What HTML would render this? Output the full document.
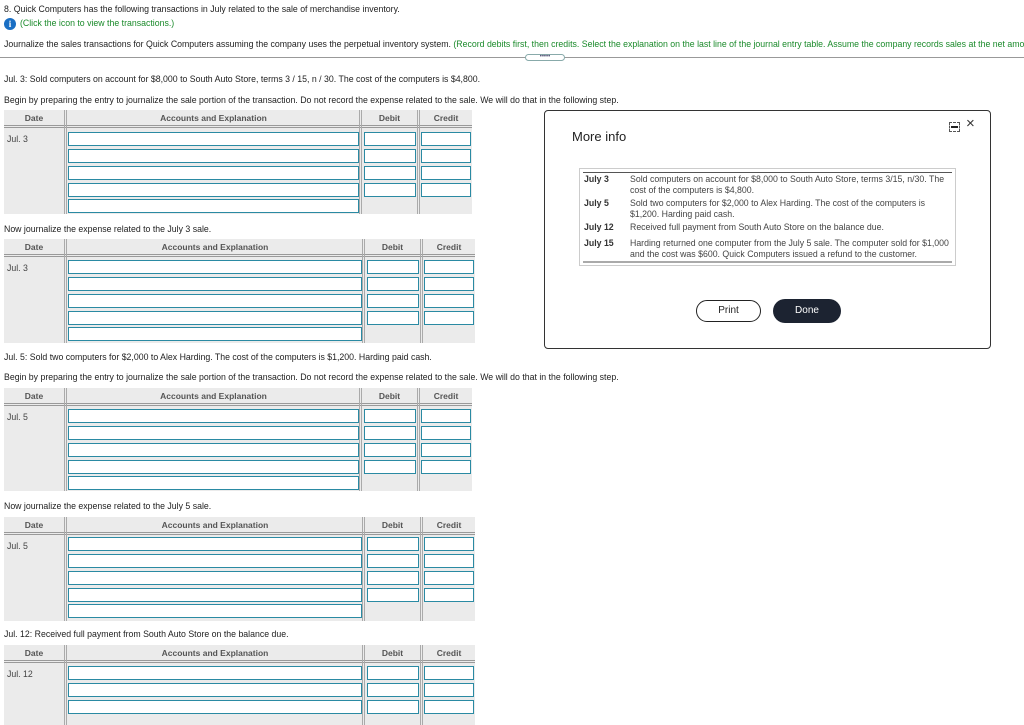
<!DOCTYPE html>
<html><head><meta charset="utf-8"><style>
*{margin:0;padding:0;box-sizing:border-box}
body{width:1024px;height:718px;overflow:hidden;background:#fff;font-family:"Liberation Sans",Arial,sans-serif;font-size:8.75px;color:#222;position:relative}
.t{position:absolute;white-space:nowrap}
.g{color:#1a8a2a}
.tbl{position:absolute;left:4px;background:#ebebeb}
.hd{position:absolute;top:0;height:18px;border-bottom:3px double #999;font-weight:bold;color:#555;text-align:center;line-height:16px;font-size:8.5px}
.vb{position:absolute;top:0;bottom:0;width:3px;border-left:1px solid #aaa;border-right:1px solid #aaa}
.in{position:absolute;height:14px;background:#fff;border:1px solid #2a8aa3}
.dt{position:absolute;left:3px;top:24px;color:#444}
.modal{position:absolute;left:544px;top:110px;width:447px;height:239px;border:1.5px solid #333;border-radius:4px;background:#fff}
</style></head><body>
<div class="t" style="left:4px;top:4px">8. Quick Computers has the following transactions in July related to the sale of merchandise inventory.</div>
<div style="position:absolute;left:4px;top:18px;width:12px;height:12px;border-radius:50%;background:#1a6fc4;color:#fff;font:bold 9px 'Liberation Serif',serif;text-align:center;line-height:12px">i</div>
<div class="t g" style="left:20px;top:18px">(Click the icon to view the transactions.)</div>
<div class="t" style="left:4px;top:39px">Journalize the sales transactions for Quick Computers assuming the company uses the perpetual inventory system. <span class="g">(Record debits first, then credits. Select the explanation on the last line of the journal entry table. Assume the company records sales at the net amount.)</span></div>
<div style="position:absolute;left:0;top:57px;width:1024px;height:1px;background:#999"></div>
<div style="position:absolute;left:525px;top:54px;width:40px;height:7px;border:1px solid #8aa;border-radius:4px;background:#fff;font-size:6px;line-height:4px;text-align:center;color:#557">•••••</div>

<div class="t" style="left:4px;top:74px">Jul. 3: Sold computers on account for $8,000 to South Auto Store, terms 3 / 15, n / 30. The cost of the computers is $4,800.</div>
<div class="t" style="left:4px;top:95px">Begin by preparing the entry to journalize the sale portion of the transaction. Do not record the expense related to the sale. We will do that in the following step.</div>

<div class="tbl" style="top:110px;width:468px;height:104px">
<div class="hd" style="left:0;width:468px"></div>
<div class="hd" style="left:0;width:60px">Date</div>
<div class="hd" style="left:64px;width:291px">Accounts and Explanation</div>
<div class="hd" style="left:358px;width:55px">Debit</div>
<div class="hd" style="left:416px;width:52px">Credit</div>
<div class="vb" style="left:60px"></div><div class="vb" style="left:355px"></div><div class="vb" style="left:413px"></div>
<div class="dt">Jul. 3</div>
<div class="in" style="left:64px;top:22px;width:291px"></div><div class="in" style="left:360px;top:22px;width:52px"></div><div class="in" style="left:417px;top:22px;width:50px"></div>
<div class="in" style="left:64px;top:39px;width:291px"></div><div class="in" style="left:360px;top:39px;width:52px"></div><div class="in" style="left:417px;top:39px;width:50px"></div>
<div class="in" style="left:64px;top:56px;width:291px"></div><div class="in" style="left:360px;top:56px;width:52px"></div><div class="in" style="left:417px;top:56px;width:50px"></div>
<div class="in" style="left:64px;top:73px;width:291px"></div><div class="in" style="left:360px;top:73px;width:52px"></div><div class="in" style="left:417px;top:73px;width:50px"></div>
<div class="in" style="left:64px;top:89px;width:291px"></div>
</div>

<div class="t" style="left:4px;top:224px">Now journalize the expense related to the July 3 sale.</div>
<div class="tbl" style="top:239px;width:471px;height:104px">
<div class="hd" style="left:0;width:471px"></div>
<div class="hd" style="left:0;width:60px">Date</div>
<div class="hd" style="left:64px;width:294px">Accounts and Explanation</div>
<div class="hd" style="left:361px;width:55px">Debit</div>
<div class="hd" style="left:419px;width:52px">Credit</div>
<div class="vb" style="left:60px"></div><div class="vb" style="left:358px"></div><div class="vb" style="left:416px"></div>
<div class="dt">Jul. 3</div>
<div class="in" style="left:64px;top:21px;width:294px"></div><div class="in" style="left:363px;top:21px;width:52px"></div><div class="in" style="left:420px;top:21px;width:50px"></div>
<div class="in" style="left:64px;top:38px;width:294px"></div><div class="in" style="left:363px;top:38px;width:52px"></div><div class="in" style="left:420px;top:38px;width:50px"></div>
<div class="in" style="left:64px;top:55px;width:294px"></div><div class="in" style="left:363px;top:55px;width:52px"></div><div class="in" style="left:420px;top:55px;width:50px"></div>
<div class="in" style="left:64px;top:72px;width:294px"></div><div class="in" style="left:363px;top:72px;width:52px"></div><div class="in" style="left:420px;top:72px;width:50px"></div>
<div class="in" style="left:64px;top:88px;width:294px"></div>
</div>

<div class="t" style="left:4px;top:352px">Jul. 5: Sold two computers for $2,000 to Alex Harding. The cost of the computers is $1,200. Harding paid cash.</div>
<div class="t" style="left:4px;top:372px">Begin by preparing the entry to journalize the sale portion of the transaction. Do not record the expense related to the sale. We will do that in the following step.</div>
<div class="tbl" style="top:388px;width:468px;height:103px">
<div class="hd" style="left:0;width:468px"></div>
<div class="hd" style="left:0;width:60px">Date</div>
<div class="hd" style="left:64px;width:291px">Accounts and Explanation</div>
<div class="hd" style="left:358px;width:55px">Debit</div>
<div class="hd" style="left:416px;width:52px">Credit</div>
<div class="vb" style="left:60px"></div><div class="vb" style="left:355px"></div><div class="vb" style="left:413px"></div>
<div class="dt">Jul. 5</div>
<div class="in" style="left:64px;top:21px;width:291px"></div><div class="in" style="left:360px;top:21px;width:52px"></div><div class="in" style="left:417px;top:21px;width:50px"></div>
<div class="in" style="left:64px;top:38px;width:291px"></div><div class="in" style="left:360px;top:38px;width:52px"></div><div class="in" style="left:417px;top:38px;width:50px"></div>
<div class="in" style="left:64px;top:55px;width:291px"></div><div class="in" style="left:360px;top:55px;width:52px"></div><div class="in" style="left:417px;top:55px;width:50px"></div>
<div class="in" style="left:64px;top:72px;width:291px"></div><div class="in" style="left:360px;top:72px;width:52px"></div><div class="in" style="left:417px;top:72px;width:50px"></div>
<div class="in" style="left:64px;top:88px;width:291px"></div>
</div>

<div class="t" style="left:4px;top:501px">Now journalize the expense related to the July 5 sale.</div>
<div class="tbl" style="top:517px;width:471px;height:104px">
<div class="hd" style="left:0;width:471px"></div>
<div class="hd" style="left:0;width:60px">Date</div>
<div class="hd" style="left:64px;width:294px">Accounts and Explanation</div>
<div class="hd" style="left:361px;width:55px">Debit</div>
<div class="hd" style="left:419px;width:52px">Credit</div>
<div class="vb" style="left:60px"></div><div class="vb" style="left:358px"></div><div class="vb" style="left:416px"></div>
<div class="dt">Jul. 5</div>
<div class="in" style="left:64px;top:20px;width:294px"></div><div class="in" style="left:363px;top:20px;width:52px"></div><div class="in" style="left:420px;top:20px;width:50px"></div>
<div class="in" style="left:64px;top:37px;width:294px"></div><div class="in" style="left:363px;top:37px;width:52px"></div><div class="in" style="left:420px;top:37px;width:50px"></div>
<div class="in" style="left:64px;top:54px;width:294px"></div><div class="in" style="left:363px;top:54px;width:52px"></div><div class="in" style="left:420px;top:54px;width:50px"></div>
<div class="in" style="left:64px;top:71px;width:294px"></div><div class="in" style="left:363px;top:71px;width:52px"></div><div class="in" style="left:420px;top:71px;width:50px"></div>
<div class="in" style="left:64px;top:87px;width:294px"></div>
</div>

<div class="t" style="left:4px;top:629px">Jul. 12: Received full payment from South Auto Store on the balance due.</div>
<div class="tbl" style="top:645px;width:471px;height:80px">
<div class="hd" style="left:0;width:471px"></div>
<div class="hd" style="left:0;width:60px">Date</div>
<div class="hd" style="left:64px;width:294px">Accounts and Explanation</div>
<div class="hd" style="left:361px;width:55px">Debit</div>
<div class="hd" style="left:419px;width:52px">Credit</div>
<div class="vb" style="left:60px"></div><div class="vb" style="left:358px"></div><div class="vb" style="left:416px"></div>
<div class="dt">Jul. 12</div>
<div class="in" style="left:64px;top:21px;width:294px"></div><div class="in" style="left:363px;top:21px;width:52px"></div><div class="in" style="left:420px;top:21px;width:50px"></div>
<div class="in" style="left:64px;top:38px;width:294px"></div><div class="in" style="left:363px;top:38px;width:52px"></div><div class="in" style="left:420px;top:38px;width:50px"></div>
<div class="in" style="left:64px;top:55px;width:294px"></div><div class="in" style="left:363px;top:55px;width:52px"></div><div class="in" style="left:420px;top:55px;width:50px"></div>
</div>

<div class="modal">
<div class="t" style="left:27px;top:18px;font-size:13px;color:#222">More info</div>
<div style="position:absolute;left:404px;top:11px;width:11px;height:10px;border:1px dashed #555"><div style="position:absolute;left:1px;top:3px;width:7px;height:2px;background:#222"></div></div>
<div class="t" style="left:421px;top:4px;font-size:15px;color:#333">×</div>
<div style="position:absolute;left:34px;top:57px;width:377px;height:98px;border:1px solid #ccc">
 <div style="position:absolute;left:3px;right:3px;top:3px;height:1px;background:#555"></div>
 <div style="position:absolute;left:3px;right:3px;top:92px;height:2px;background:#aaa"></div>
 <div class="t" style="left:4px;top:5px;font-weight:bold;color:#333">July 3</div>
 <div class="t" style="left:50px;top:5px;line-height:10.5px;color:#444">Sold computers on account for $8,000 to South Auto Store, terms 3/15, n/30. The<br>cost of the computers is $4,800.</div>
 <div class="t" style="left:4px;top:29px;font-weight:bold;color:#333">July 5</div>
 <div class="t" style="left:50px;top:29px;line-height:10.5px;color:#444">Sold two computers for $2,000 to Alex Harding. The cost of the computers is<br>$1,200. Harding paid cash.</div>
 <div class="t" style="left:4px;top:53px;font-weight:bold;color:#333">July 12</div>
 <div class="t" style="left:50px;top:53px;color:#444">Received full payment from South Auto Store on the balance due.</div>
 <div class="t" style="left:4px;top:69px;font-weight:bold;color:#333">July 15</div>
 <div class="t" style="left:50px;top:69px;line-height:10.5px;color:#444">Harding returned one computer from the July 5 sale. The computer sold for $1,000<br>and the cost was $600. Quick Computers issued a refund to the customer.</div>
</div>
<div style="position:absolute;left:151px;top:189px;width:65px;height:22px;border:1px solid #222;border-radius:11px;text-align:center;line-height:20px;font-size:10px">Print</div>
<div style="position:absolute;left:228px;top:188px;width:68px;height:24px;background:#1c2331;border-radius:12px;text-align:center;line-height:24px;font-size:10px;color:#fff">Done</div>
</div>
</body></html>
